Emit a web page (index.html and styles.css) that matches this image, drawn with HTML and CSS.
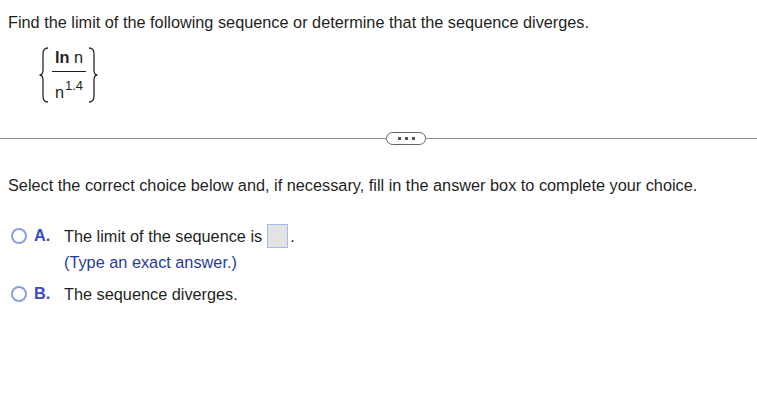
FILE: index.html
```html
<!DOCTYPE html>
<html>
<head>
<meta charset="utf-8">
<link rel="stylesheet" href="styles.css">
</head>
<body>
<div class="question">
  <p class="prompt">Find the limit of the following sequence or determine that the sequence diverges.</p>
  <div class="expr">
    <svg class="brace" width="12" height="56" viewBox="0 0 12 56"><path d="M10,1 C6,1 5,3 5,7 L5,23 C5,26 4,28 1.5,28 C4,28 5,30 5,33 L5,49 C5,53 6,55 10,55" fill="none" stroke="#2a2a2a" stroke-width="1.3"/></svg>
    <span class="frac">
      <span class="num"><b>ln</b> n</span>
      <span class="den">n<sup>1.4</sup></span>
    </span>
    <svg class="brace" width="12" height="56" viewBox="0 0 12 56"><path d="M2,1 C6,1 7,3 7,7 L7,23 C7,26 8,28 10.5,28 C8,28 7,30 7,33 L7,49 C7,53 6,55 2,55" fill="none" stroke="#2a2a2a" stroke-width="1.3"/></svg>
  </div>
</div>
<div class="divider">
  <span class="line left"></span>
  <span class="more"><i></i><i></i><i></i></span>
  <span class="line"></span>
</div>
<div class="answer">
  <p class="instr">Select the correct choice below and, if necessary, fill in the answer box to complete your choice.</p>
  <div class="choice a">
    <span class="radio"></span>
    <span class="label">A.</span>
    <div class="body">
      <div class="row">The limit of the sequence is <span class="box"></span>.</div>
      <div class="hint">(Type an exact answer.)</div>
    </div>
  </div>
  <div class="choice b">
    <span class="radio"></span>
    <span class="label">B.</span>
    <div class="body">
      <div class="row">The sequence diverges.</div>
    </div>
  </div>
</div>
</body>
</html>
```
FILE: styles.css
```css
html, body { margin: 0; padding: 0; background: #fff; }
body {
  font-family: "Liberation Sans", Arial, sans-serif;
  font-size: 16.3px;
  color: #1f1f1f;
  width: 757px;
  height: 417px;
  overflow: hidden;
}
p { margin: 0; }
.question { padding: 13px 0 0 8px; }
.prompt { line-height: 18px; }
.expr {
  display: flex;
  align-items: center;
  margin: 16px 0 0 30px;
  height: 56px;
}
.brace { display: block; flex: none; }
.frac {
  display: flex;
  flex-direction: column;
  align-items: center;
  margin: 0 1px 0 2px;
}
.num {
  border-bottom: 1px solid #1f1f1f;
  padding: 0 3px 5px;
  line-height: 18px;
}
.den { line-height: 20px; padding-top: 10px; }
.den sup { font-size: 13px; vertical-align: 8px; line-height: 0; margin-left: 1px; }
.divider {
  display: flex;
  align-items: center;
  margin-top: 28px;
  height: 14px;
}
.line { flex: 1; height: 1px; background: #8a8f9c; }
.line.left { flex: none; width: 386px; }
.more {
  width: 38px;
  height: 11px;
  border: 1px solid #5f6670;
  border-radius: 7px;
  display: flex;
  align-items: center;
  justify-content: center;
  gap: 4px;
  flex: none;
}
.more i { width: 3px; height: 3px; background: #555; display: block; }
.answer { padding: 31px 0 0 8px; }
.instr { line-height: 18px; }
.choice {
  display: flex;
  align-items: flex-start;
  padding-left: 3px;
}
.choice.a { margin-top: 30px; }
.choice.b { margin-top: 11px; }
.radio {
  width: 12px;
  height: 12px;
  border: 2px solid #8e9ee0;
  border-radius: 50%;
  margin-top: 4px;
  flex: none;
}
.label {
  color: #3a4cc0;
  font-weight: bold;
  margin-left: 7px;
  width: 24px;
  line-height: 22px;
}
.body { margin-left: 6px; }
.row {
  display: flex;
  align-items: center;
  line-height: 24px;
  height: 24px;
}
.box {
  display: inline-block;
  width: 19px;
  height: 22px;
  background: #e3e3e3;
  border: 1px solid #a6bce8;
  margin: 0 2px 0 5px;
}
.hint {
  color: #2a3a9a;
  margin-top: 5px;
  line-height: 18px;
}
```
